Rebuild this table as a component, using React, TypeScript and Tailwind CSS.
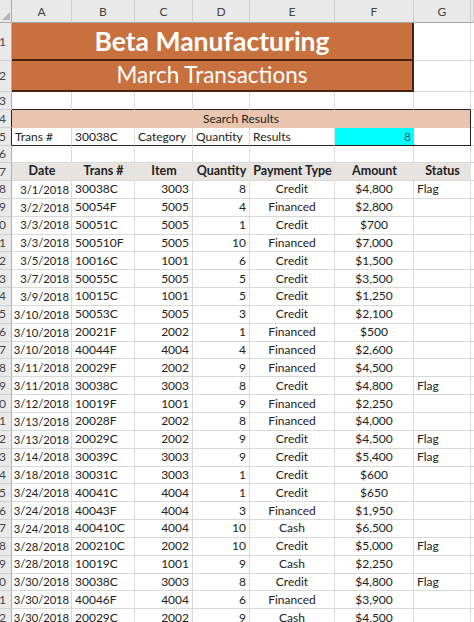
import React from "react";

const rows: [string, string, string, string, string, string, string][] = [
  ["3/1/2018", "30038C", "3003", "8", "Credit", "$4,800", "Flag"],
  ["3/2/2018", "50054F", "5005", "4", "Financed", "$2,800", ""],
  ["3/3/2018", "50051C", "5005", "1", "Credit", "$700", ""],
  ["3/3/2018", "500510F", "5005", "10", "Financed", "$7,000", ""],
  ["3/5/2018", "10016C", "1001", "6", "Credit", "$1,500", ""],
  ["3/7/2018", "50055C", "5005", "5", "Credit", "$3,500", ""],
  ["3/9/2018", "10015C", "1001", "5", "Credit", "$1,250", ""],
  ["3/10/2018", "50053C", "5005", "3", "Credit", "$2,100", ""],
  ["3/10/2018", "20021F", "2002", "1", "Financed", "$500", ""],
  ["3/10/2018", "40044F", "4004", "4", "Financed", "$2,600", ""],
  ["3/11/2018", "20029F", "2002", "9", "Financed", "$4,500", ""],
  ["3/11/2018", "30038C", "3003", "8", "Credit", "$4,800", "Flag"],
  ["3/12/2018", "10019F", "1001", "9", "Financed", "$2,250", ""],
  ["3/13/2018", "20028F", "2002", "8", "Financed", "$4,000", ""],
  ["3/13/2018", "20029C", "2002", "9", "Credit", "$4,500", "Flag"],
  ["3/14/2018", "30039C", "3003", "9", "Credit", "$5,400", "Flag"],
  ["3/18/2018", "30031C", "3003", "1", "Credit", "$600", ""],
  ["3/24/2018", "40041C", "4004", "1", "Credit", "$650", ""],
  ["3/24/2018", "40043F", "4004", "3", "Financed", "$1,950", ""],
  ["3/24/2018", "400410C", "4004", "10", "Cash", "$6,500", ""],
  ["3/28/2018", "200210C", "2002", "10", "Credit", "$5,000", "Flag"],
  ["3/28/2018", "10019C", "1001", "9", "Cash", "$2,250", ""],
  ["3/30/2018", "30038C", "3003", "8", "Credit", "$4,800", "Flag"],
  ["3/30/2018", "40046F", "4004", "6", "Financed", "$3,900", ""],
  ["3/30/2018", "20029C", "2002", "9", "Cash", "$4,500", ""],
];

const GRID = "grid grid-cols-[12px_60px_63px_58px_57px_85px_79px_57px_3px]";
const G = "border-r border-b border-[#d9d9d9]";

function RowHead({ n, dark }: { n: number; dark?: boolean }) {
  return (
    <div
      className={`bg-[#e9e9e9] border-b border-[#d0d0d0] ${
        dark ? "border-r border-r-[#222]" : "border-r border-r-[#b0b0b0]"
      } overflow-hidden flex items-center justify-end pr-[5px] text-[12px] text-[#444] whitespace-nowrap`}
    >
      {n}
    </div>
  );
}

export default function App() {
  return (
    <div className="w-[474px] h-[622px] overflow-hidden bg-white [font-family:Lato,'Open_Sans',sans-serif] text-[#222] text-[12px] leading-none">
      {/* column header row */}
      <div className={`${GRID} h-[23px]`}>
        <div className="bg-[#e9e9e9] border-r border-b border-[#a8a8a8] relative">
          <div className="absolute right-[1px] bottom-[2px] w-0 h-0 border-l-[8px] border-l-transparent border-b-[8px] border-b-[#b4b4b4]" />
        </div>
        {["A", "B", "C", "D", "E", "F", "G", ""].map((c, i) => (
          <div
            key={i}
            className="bg-[#e9e9e9] border-r border-r-[#d0d0d0] border-b border-b-[#a8a8a8] flex items-end justify-center pb-[4px] text-[12px] text-[#444]"
          >
            {c}
          </div>
        ))}
      </div>

      {/* row 1 */}
      <div className={`${GRID} h-[38px]`}>
        <RowHead n={1} />
        <div className="col-span-6 bg-[#c8713f] border-b-2 border-r-2 border-[#4a2310] flex items-center justify-center text-white font-bold text-[26.5px]">
          Beta Manufacturing
        </div>
        <div className={G} />
        <div className="border-b border-[#d9d9d9]" />
      </div>

      {/* row 2 */}
      <div className={`${GRID} h-[31px]`}>
        <RowHead n={2} />
        <div className="col-span-6 bg-[#c8713f] border-b-2 border-r-2 border-[#4a2310] flex items-center justify-center text-white text-[22.5px]">
          March Transactions
        </div>
        <div className={G} />
        <div className="border-b border-[#d9d9d9]" />
      </div>

      {/* row 3 */}
      <div className={`${GRID} h-[18px]`}>
        <RowHead n={3} />
        {[0, 1, 2, 3, 4, 5, 6].map((i) => (
          <div key={i} className="border-r border-r-[#d9d9d9] border-b border-b-[#222]" />
        ))}
        <div className="border-b border-[#d9d9d9]" />
      </div>

      {/* row 4 */}
      <div className={`${GRID} h-[18px]`}>
        <RowHead n={4} dark />
        <div className="col-span-7 bg-[#e9c5b0] border-r border-[#222] flex items-center justify-center">
          Search Results
        </div>
        <div className="border-b border-[#d9d9d9]" />
      </div>

      {/* row 5 */}
      <div className={`${GRID} h-[18px]`}>
        <RowHead n={5} dark />
        {["Trans #", "30038C", "Category", "Quantity", "Results"].map((t, i) => (
          <div
            key={i}
            className="border-r border-r-[#d9d9d9] border-b border-b-[#222] flex items-center pl-[3px] whitespace-nowrap"
          >
            {t}
          </div>
        ))}
        <div className="bg-[#00ffff] border-b border-[#222] flex items-center justify-end pr-[3px] text-[#1b5e6a]">
          8
        </div>
        <div className="border-r border-b border-[#222]" />
        <div className="border-b border-[#d9d9d9]" />
      </div>

      {/* row 6 */}
      <div className={`${GRID} h-[17px]`}>
        <RowHead n={6} />
        {[0, 1, 2, 3, 4, 5, 6].map((i) => (
          <div key={i} className={G} />
        ))}
        <div className="border-b border-[#d9d9d9]" />
      </div>

      {/* row 7 header */}
      <div className={`${GRID} h-[18px]`}>
        <RowHead n={7} />
        {["Date", "Trans #", "Item", "Quantity", "Payment Type", "Amount", "Status"].map((t, i) => (
          <div
            key={i}
            className="bg-[#e7e3e1] border-b border-[#d9d9d9] flex items-center justify-center font-bold text-[12.5px] whitespace-nowrap"
          >
            {t}
          </div>
        ))}
        <div className="border-b border-[#d9d9d9]" />
      </div>

      {/* data rows */}
      {rows.map((r, idx) => (
        <div key={idx} className={`${GRID} h-[17.85px]`}>
          <RowHead n={idx + 8} />
          <div className={`${G} flex items-center justify-end pr-[2px] whitespace-nowrap text-[11.3px] tracking-[-0.1px]`}>{r[0]}</div>
          <div className={`${G} flex items-center pl-[3px] whitespace-nowrap`}>{r[1]}</div>
          <div className={`${G} flex items-center justify-end pr-[3px]`}>{r[2]}</div>
          <div className={`${G} flex items-center justify-end pr-[3px]`}>{r[3]}</div>
          <div className={`${G} flex items-center justify-center`}>{r[4]}</div>
          <div className={`${G} flex items-center justify-center`}>{r[5]}</div>
          <div className={`${G} flex items-center pl-[3px]`}>{r[6]}</div>
          <div className="border-b border-[#d9d9d9]" />
        </div>
      ))}
    </div>
  );
}
